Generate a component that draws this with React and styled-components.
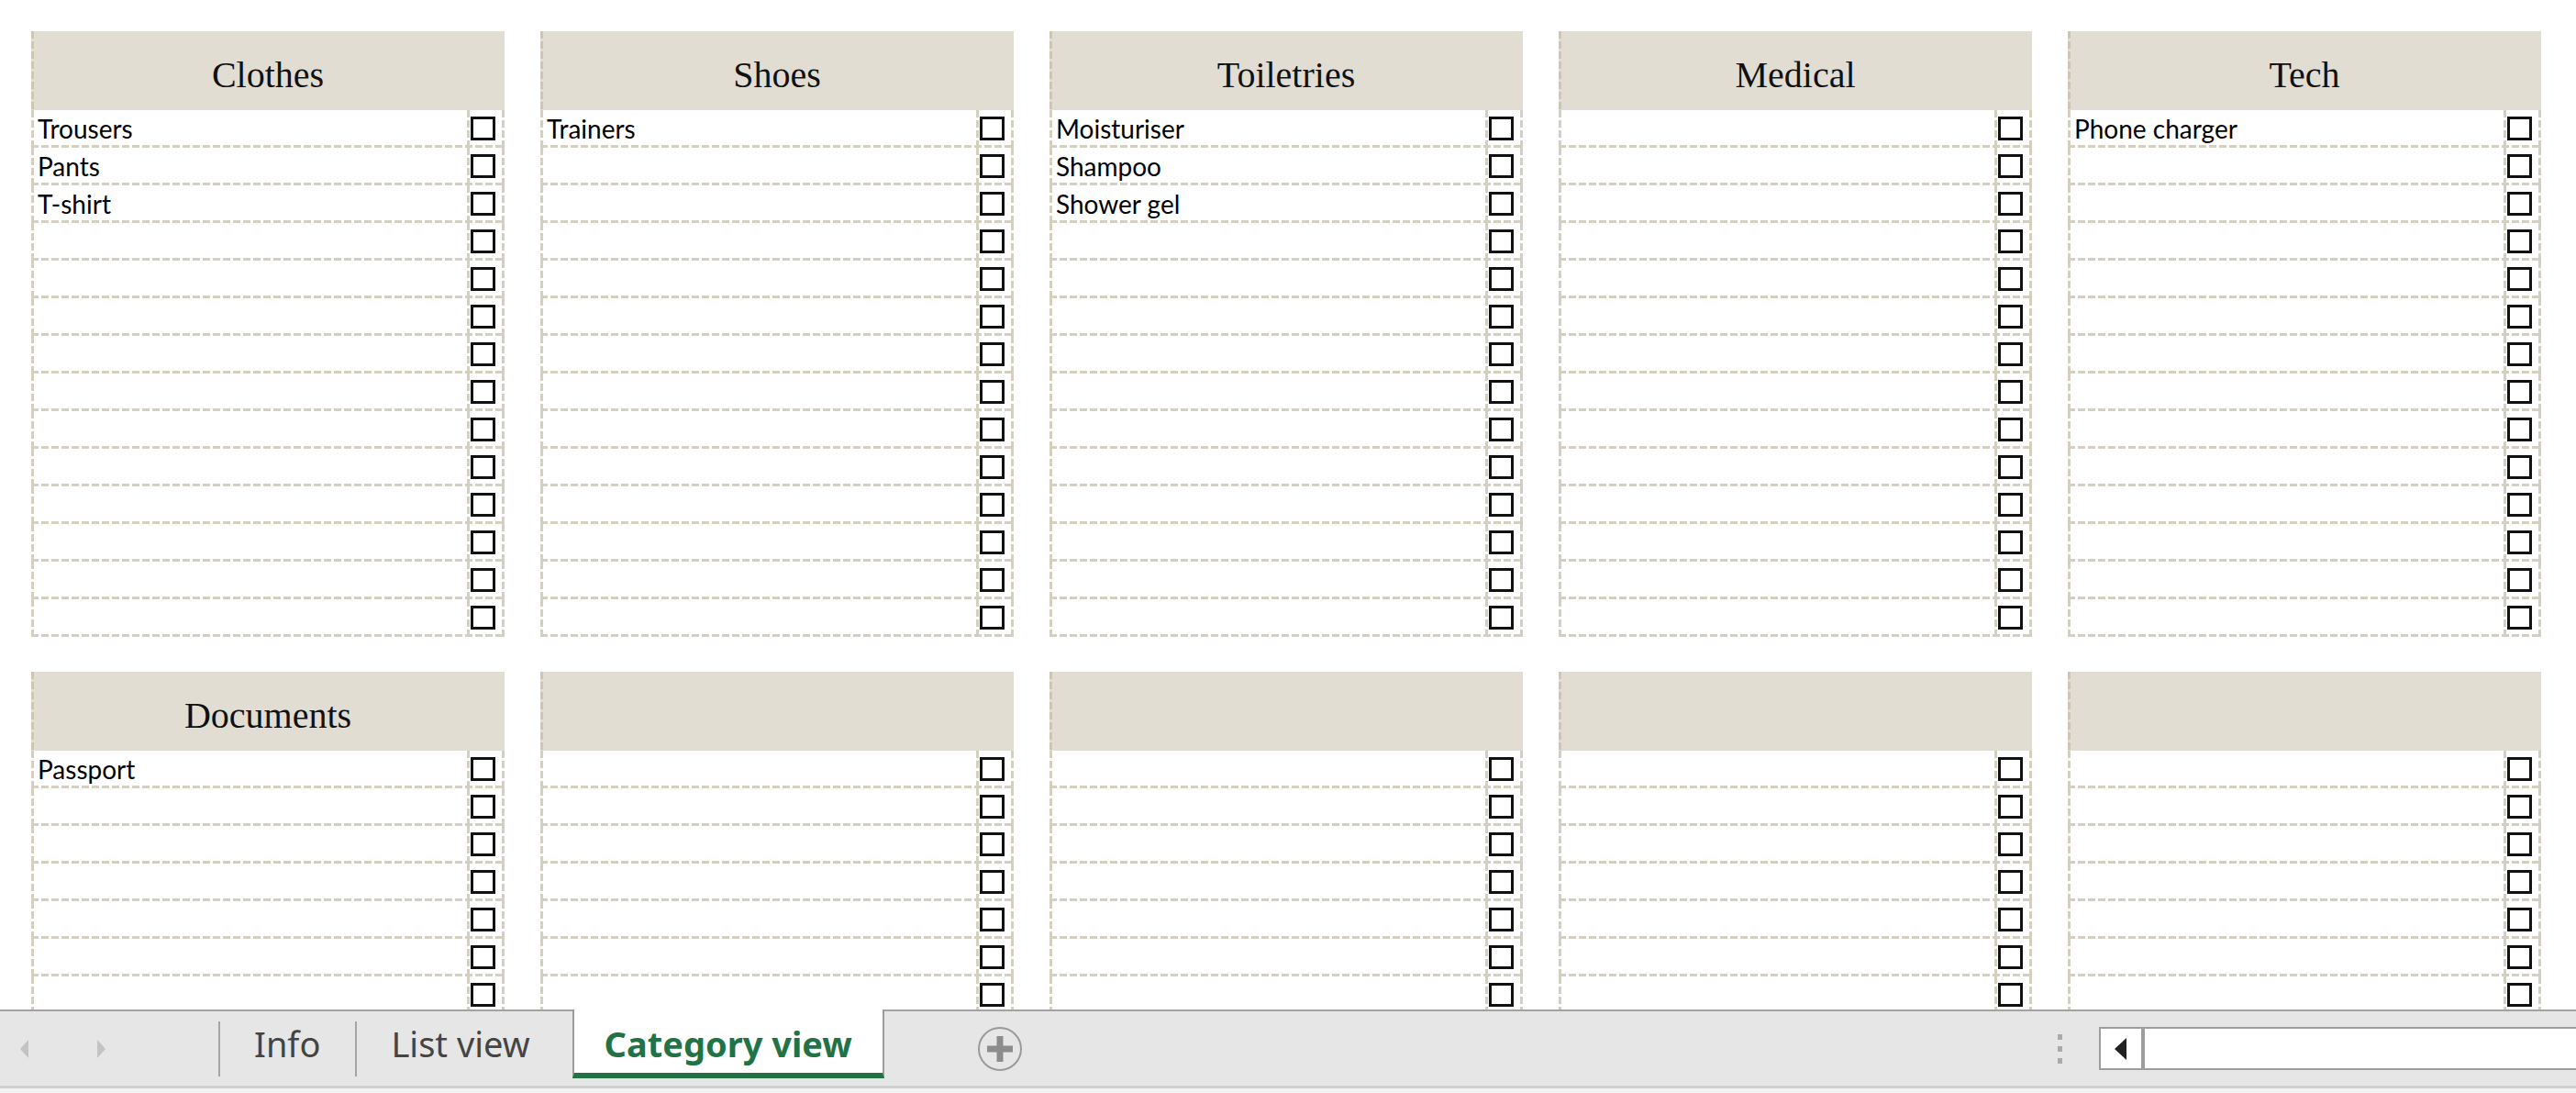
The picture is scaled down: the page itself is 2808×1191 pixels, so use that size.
import React from "react";
import styled, { createGlobalStyle, css } from "styled-components";

const GlobalStyle = createGlobalStyle`
  html, body {
    margin: 0;
    padding: 0;
    background: #ffffff;
    overflow: hidden;
  }
`;

const ROWS = 14;

const sections = [
  [
    { title: "Clothes", items: ["Trousers", "Pants", "T-shirt"] },
    { title: "Shoes", items: ["Trainers"] },
    { title: "Toiletries", items: ["Moisturiser", "Shampoo", "Shower gel"] },
    { title: "Medical", items: [] },
    { title: "Tech", items: ["Phone charger"] },
  ],
  [
    { title: "Documents", items: ["Passport"] },
    { title: "", items: [] },
    { title: "", items: [] },
    { title: "", items: [] },
    { title: "", items: [] },
  ],
];

const Category = ({ title, items }) => {
  const rows = Array.from({ length: ROWS }, (_, i) => items[i] || "");
  return (
    <Card>
      <CardHeader>{title}</CardHeader>
      {rows.map((item, i) => (
        <ItemRow key={i}>
          <ItemText>{item}</ItemText>
          <CheckCell>
            <CheckBox />
          </CheckCell>
        </ItemRow>
      ))}
    </Card>
  );
};

const App = () => {
  return (
    <>
      <GlobalStyle />
      <Page>
        <Sheet>
          {sections.map((cats, s) => (
            <CardGrid key={s}>
              {cats.map((c, i) => (
                <Category key={i} title={c.title} items={c.items} />
              ))}
            </CardGrid>
          ))}
        </Sheet>
        <TabBar>
          <TabRow>
            <NavArea>
              <NavArrow $dir="left" />
              <NavArrow $dir="right" />
            </NavArea>
            <Divider />
            <SheetTab>Info</SheetTab>
            <Divider />
            <SheetTab $last>List view</SheetTab>
            <ActiveTab>Category view</ActiveTab>
            <AddSheet>
              <svg width="30" height="30" viewBox="0 0 30 30">
                <rect x="11.5" y="1" width="7" height="28" fill="#8c8c8c" />
                <rect x="1" y="11.5" width="28" height="7" fill="#8c8c8c" />
              </svg>
            </AddSheet>
            <Spacer />
            <Grip>
              <span />
              <span />
              <span />
            </Grip>
            <ScrollBar>
              <ScrollButton>
                <svg width="14" height="24" viewBox="0 0 14 24">
                  <path d="M13 0 L0 12 L13 24 Z" fill="#222" />
                </svg>
              </ScrollButton>
              <ScrollTrack />
            </ScrollBar>
          </TabRow>
          <BottomStrip />
        </TabBar>
      </Page>
    </>
  );
};

export default App;

// dashed cell borders, drawn as gradients to get Excel's 8px dash / 3px gap
const LINE = "#d5cfc1";
const hDash = (pos, color = LINE) =>
  `repeating-linear-gradient(90deg, ${color} 0 8px, transparent 8px 11px) left ${pos} / 100% 3px no-repeat`;
const vDash = (pos, color = LINE) =>
  `repeating-linear-gradient(180deg, ${color} 0 8px, transparent 8px 11px) ${pos} top / 3px 100% no-repeat`;

const Page = styled.div`
  display: flex;
  flex-direction: column;
  height: 100vh;
  width: 100vw;
`;

const Sheet = styled.div`
  flex: 1;
  overflow: hidden;
  padding: 34px 0 0 34px;
`;

const CardGrid = styled.div`
  display: grid;
  grid-template-columns: repeat(5, 516px);
  column-gap: 39px;
  margin-bottom: 38px;
`;

const Card = styled.div`
  display: flex;
  flex-direction: column;
`;

const CardHeader = styled.div`
  height: 86px;
  box-sizing: border-box;
  padding-top: 8px;
  background: ${vDash("left", "#cdc6b5")}, #e2ddd3;
  display: flex;
  align-items: center;
  justify-content: center;
  font-family: "Liberation Serif", "Times New Roman", serif;
  font-size: 40px;
  color: #111;
`;

const ItemRow = styled.div`
  display: grid;
  grid-template-columns: 1fr 41px;
  height: 41px;
  box-sizing: border-box;
  background: ${hDash("bottom")}, ${vDash("left")};
`;

const ItemText = styled.div`
  padding-left: 7px;
  font-family: Lato, "Liberation Sans", sans-serif;
  font-size: 28px;
  line-height: 41px;
  color: #000;
  white-space: nowrap;
  overflow: hidden;
`;

const CheckCell = styled.div`
  display: flex;
  align-items: flex-start;
  padding: 7px 0 0 4px;
  box-sizing: border-box;
  background: ${vDash("left")}, ${vDash("right")};
`;

const CheckBox = styled.span`
  display: block;
  width: 27px;
  height: 26px;
  box-sizing: border-box;
  border: 3px solid #111;
  background: #fff;
`;

const TabBar = styled.div`
  flex: 0 0 91px;
  display: flex;
  flex-direction: column;
  background: #e6e6e6;
  border-top: 2px solid #a3a3a3;
  box-sizing: border-box;
  font-family: "Noto Sans", "Open Sans", sans-serif;
`;

const TabRow = styled.div`
  flex: 1;
  display: flex;
  align-items: center;
`;

const BottomStrip = styled.div`
  height: 5px;
  background: #f3f3f3;
  border-top: 3px solid #cfcfcf;
`;

const NavArea = styled.div`
  width: 238px;
  align-self: stretch;
  display: flex;
  align-items: center;
  padding-left: 22px;
  gap: 75px;
  box-sizing: border-box;
`;

const NavArrow = styled.span`
  width: 0;
  height: 0;
  border-top: 10px solid transparent;
  border-bottom: 10px solid transparent;
  ${(p) =>
    p.$dir === "left"
      ? css`border-right: 9px solid #c3c3c3;`
      : css`border-left: 9px solid #c3c3c3;`}
`;

const Divider = styled.span`
  width: 2px;
  height: 60px;
  background: #a5a5a5;
`;

const SheetTab = styled.div`
  padding: 0 ${(p) => (p.$last ? "46px" : "38px")} 12px 37px;
  font-size: 38px;
  color: #444;
  white-space: nowrap;
`;

const ActiveTab = styled.div`
  align-self: flex-start;
  margin-top: -2px;
  height: 75px;
  box-sizing: border-box;
  padding: 4px 33px 0;
  display: flex;
  align-items: center;
  background: #fff;
  border-left: 2px solid #9c9c9c;
  border-right: 2px solid #9c9c9c;
  border-bottom: 6px solid #217346;
  font-size: 38px;
  font-weight: 700;
  color: #217346;
  white-space: nowrap;
`;

const AddSheet = styled.div`
  margin-left: 102px;
  width: 48px;
  height: 48px;
  box-sizing: border-box;
  border: 2px solid #9a9a9a;
  border-radius: 50%;
  display: flex;
  align-items: center;
  justify-content: center;
`;

const Spacer = styled.div`
  flex: 1;
`;

const Grip = styled.div`
  display: flex;
  flex-direction: column;
  gap: 7px;
  margin-right: 40px;

  span {
    width: 5px;
    height: 6px;
    background: #aaaaaa;
  }
`;

const ScrollBar = styled.div`
  width: 520px;
  height: 47px;
  box-sizing: border-box;
  border: 2px solid #9d9d9d;
  border-right: none;
  display: flex;
  background: #fff;
`;

const ScrollButton = styled.div`
  width: 44px;
  border-right: 4px solid #9d9d9d;
  display: flex;
  align-items: center;
  justify-content: center;
`;

const ScrollTrack = styled.div`
  flex: 1;
`;
